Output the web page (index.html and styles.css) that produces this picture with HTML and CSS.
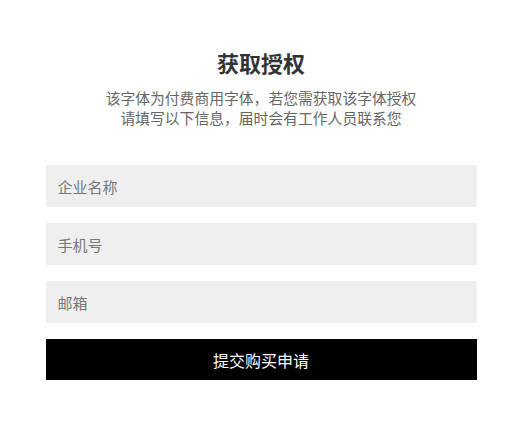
FILE: index.html
```html
<!DOCTYPE html>
<html lang="zh-CN">
<head>
<meta charset="utf-8">
<title>获取授权</title>
<link rel="stylesheet" href="styles.css">
</head>
<body>
<main class="panel">
  <h1 class="title">获取授权</h1>
  <p class="desc">该字体为付费商用字体，若您需获取该字体授权<br>请填写以下信息，届时会有工作人员联系您</p>
  <form class="form">
    <input class="field" type="text" placeholder="企业名称">
    <input class="field" type="text" placeholder="手机号">
    <input class="field" type="text" placeholder="邮箱">
    <button class="submit" type="button">提交购买申请</button>
  </form>
</main>
</body>
</html>
```
FILE: styles.css
```css
html, body {
  margin: 0;
  padding: 0;
  background: #fff;
  font-family: "Noto Sans CJK SC", "Noto Sans", sans-serif;
}
.panel {
  width: 431px;
  margin: 0 auto;
  padding-top: 47px;
  display: flex;
  flex-direction: column;
  align-items: stretch;
}
.title {
  margin: 0;
  font-size: 22px;
  line-height: 30px;
  font-weight: 700;
  color: #333;
  text-align: center;
}
.desc {
  margin: 11px 0 0;
  font-size: 14.8px;
  line-height: 20px;
  color: #666;
  text-align: center;
}
.form {
  margin-top: 37px;
  display: flex;
  flex-direction: column;
  gap: 16px;
}
.field {
  box-sizing: border-box;
  height: 42px;
  border: 0;
  outline: none;
  background: #efefef;
  padding: 0 12px;
  font-family: inherit;
  font-size: 15px;
  color: #333;
}
.field::placeholder {
  color: #777;
}
.submit {
  height: 41px;
  border: 0;
  background: #000;
  color: #fff;
  font-family: inherit;
  font-size: 16px;
  cursor: pointer;
}
```
